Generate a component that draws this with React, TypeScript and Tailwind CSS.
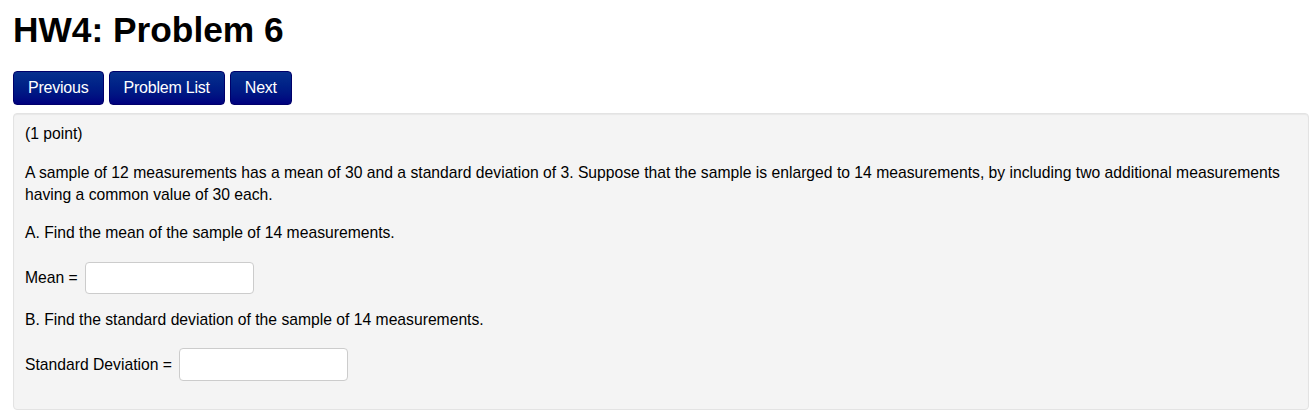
export default function App() {
  return (
    <div className="min-h-screen bg-white px-[13px] pt-[10px] font-['Liberation_Sans',Arial,sans-serif] text-black">
      <h1 className="text-[35.3px] font-bold leading-[40px]">HW4: Problem 6</h1>

      {/* Navigation */}
      <div className="mt-[21px] flex gap-[5px]">
        <button className="h-[34px] rounded-[4px] border border-[#00006a] bg-gradient-to-b from-[#08308e] to-[#00007e] px-[14px] text-[16px] tracking-[-0.22px] text-white">
          Previous
        </button>
        <button className="h-[34px] rounded-[4px] border border-[#00006a] bg-gradient-to-b from-[#08308e] to-[#00007e] px-[14px] text-[16px] tracking-[-0.22px] text-white">
          Problem List
        </button>
        <button className="h-[34px] rounded-[4px] border border-[#00006a] bg-gradient-to-b from-[#08308e] to-[#00007e] px-[14px] text-[16px] tracking-[-0.22px] text-white">
          Next
        </button>
      </div>

      {/* Problem body */}
      <div className="mt-[8px] w-[1296px] rounded-[4px] border border-[#e3e3e3] bg-[#f4f4f4] px-[11px] pt-[9px] pb-[28px] text-[15.7px] leading-[22px] shadow-[inset_0_1px_1px_rgba(0,0,0,0.05)]">
        <p>(1 point)</p>
        <p className="mt-[17px]">
          A sample of 12 measurements has a mean of 30 and a standard deviation of 3. Suppose that the sample is enlarged to 14 measurements, by including two additional measurements having a common value of 30 each.
        </p>
        <p className="mt-[16px]">A. Find the mean of the sample of 14 measurements.</p>
        <div className="mt-[18px] flex items-center gap-[7px]">
          <span>Mean =</span>
          <input className="h-[32px] w-[169px] rounded-[4px] border border-[#cccccc] bg-white px-2 outline-none" />
        </div>
        <p className="mt-[15px]">B. Find the standard deviation of the sample of 14 measurements.</p>
        <div className="mt-[17px] flex items-center gap-[7px]">
          <span>Standard Deviation =</span>
          <input className="h-[33px] w-[169px] rounded-[4px] border border-[#cccccc] bg-white px-2 outline-none" />
        </div>
      </div>
    </div>
  );
}
